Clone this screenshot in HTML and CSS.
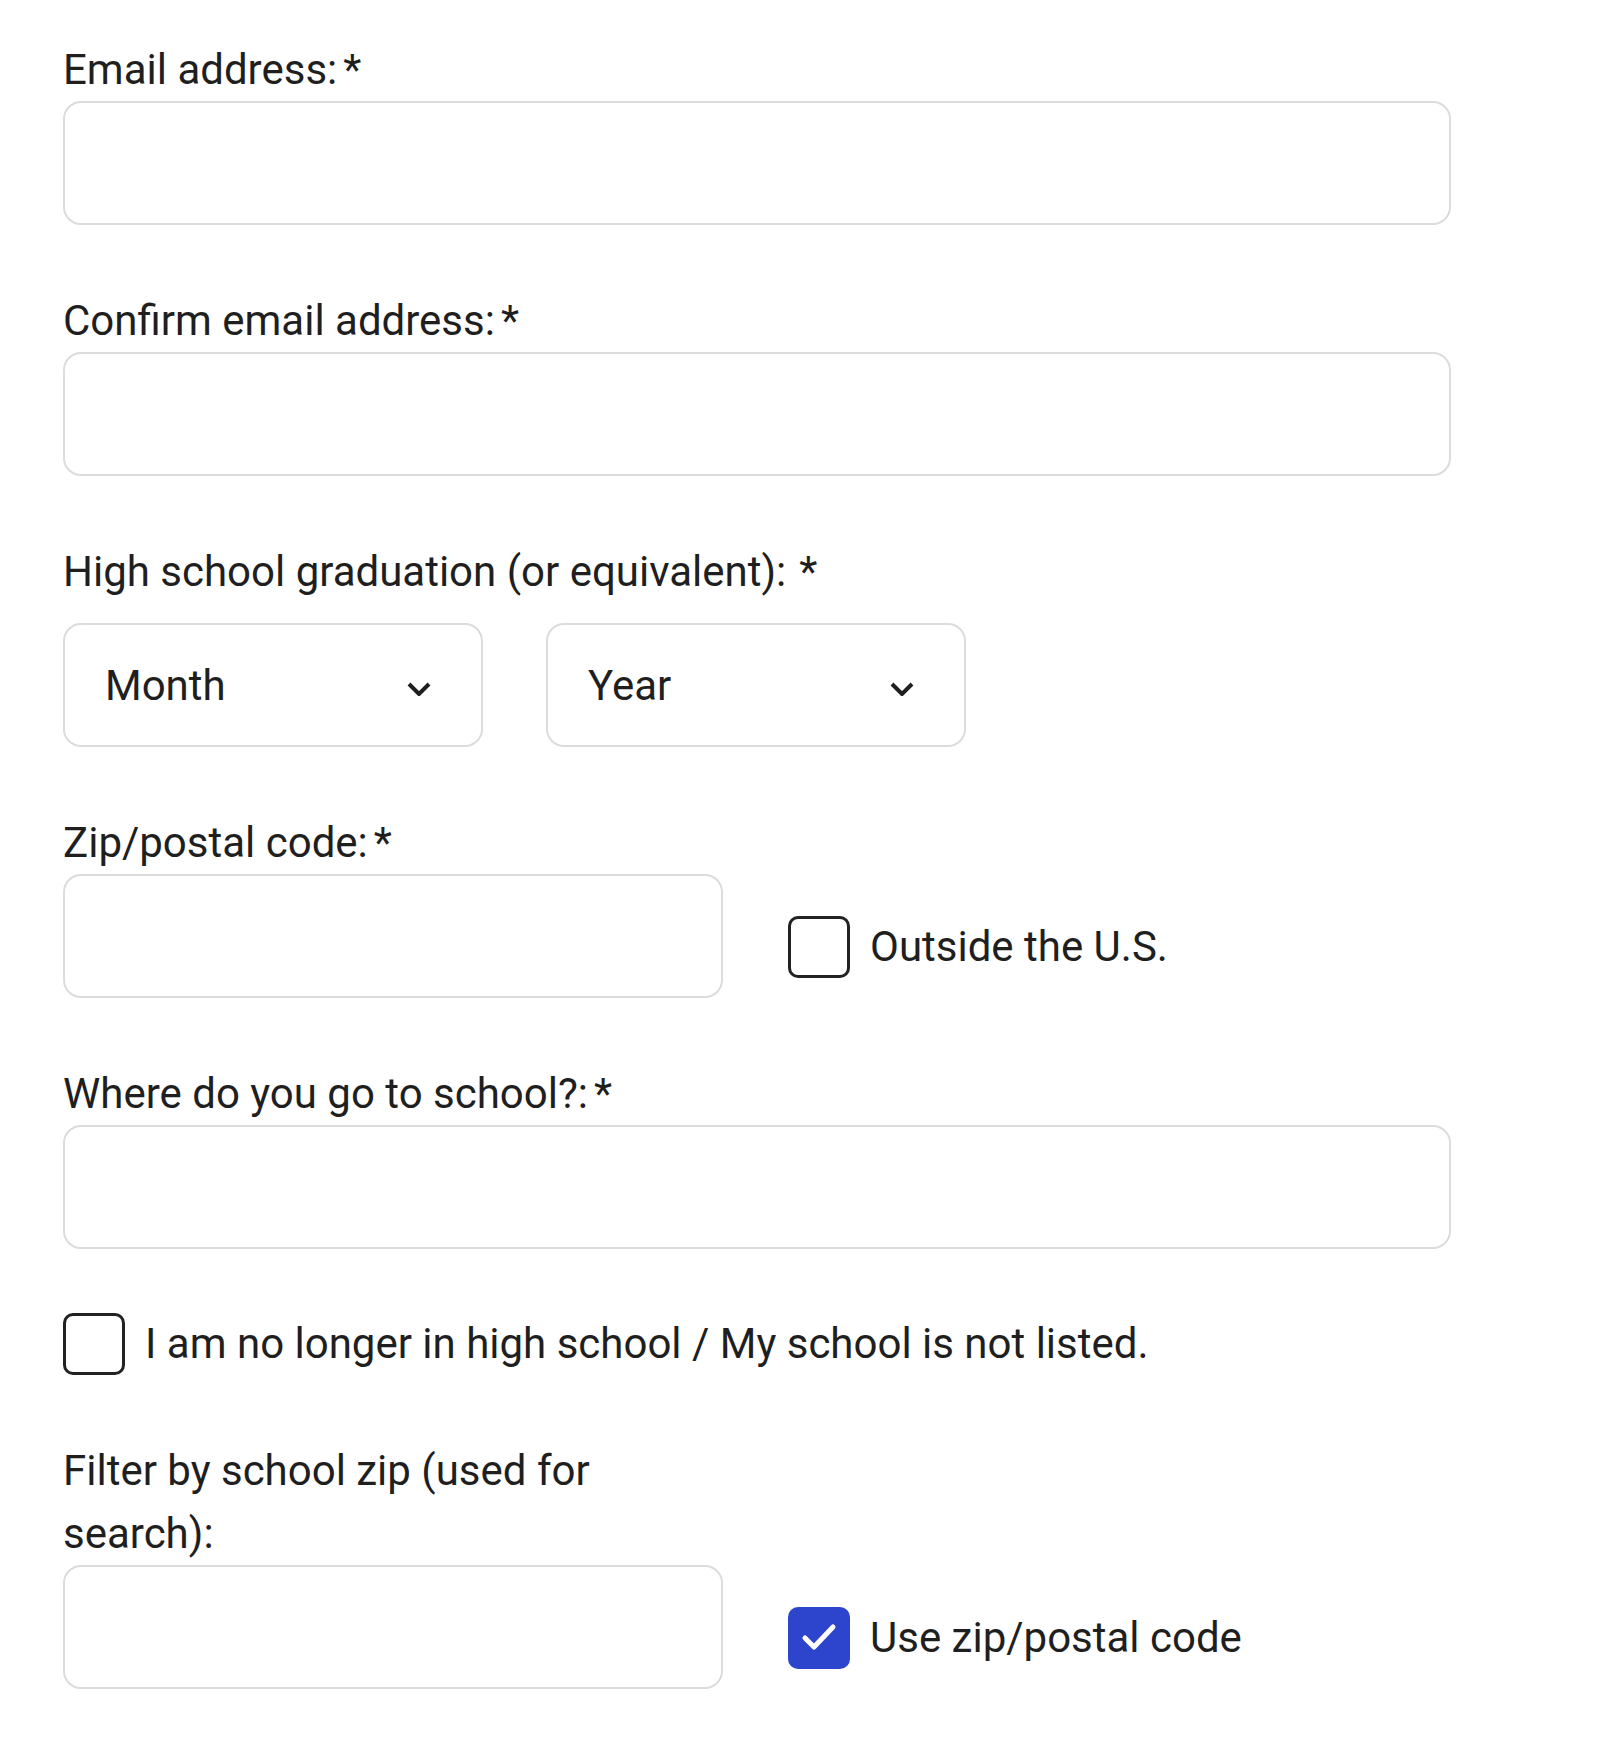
FILE: index.html
```html
<!DOCTYPE html>
<html lang="en">
<head>
    <meta charset="UTF-8">
    <meta name="viewport" content="width=device-width, initial-scale=1.0">
    <title>Student Information</title>
    <link rel="stylesheet" href="styles.css">
</head>
<body>
    <form class="signup">
        <div class="field">
            <label class="field-label" for="email">Email address:<span class="req">*</span></label>
            <input class="text-input" type="text" id="email">
        </div>

        <div class="field">
            <label class="field-label" for="email-confirm">Confirm email address:<span class="req">*</span></label>
            <input class="text-input" type="text" id="email-confirm">
        </div>

        <div class="field">
            <label class="field-label spaced">High school graduation (or equivalent):<span class="req wide">*</span></label>
            <div class="date-row">
                <div class="select">
                    <span>Month</span>
                    <svg class="chevron" viewBox="0 0 24 14" width="24" height="14"><path d="M2 2l10 10L22 2" fill="none" stroke="#1f1f1f" stroke-width="4"/></svg>
                </div>
                <div class="select">
                    <span>Year</span>
                    <svg class="chevron" viewBox="0 0 24 14" width="24" height="14"><path d="M2 2l10 10L22 2" fill="none" stroke="#1f1f1f" stroke-width="4"/></svg>
                </div>
            </div>
        </div>

        <div class="field">
            <label class="field-label" for="zip">Zip/postal code:<span class="req">*</span></label>
            <div class="split-row">
                <input class="text-input" type="text" id="zip">
                <label class="check">
                    <span class="box"></span>
                    Outside the U.S.
                </label>
            </div>
        </div>

        <div class="field">
            <label class="field-label" for="school">Where do you go to school?:<span class="req">*</span></label>
            <input class="text-input" type="text" id="school">
        </div>

        <div class="field">
            <label class="check">
                <span class="box"></span>
                I am no longer in high school / My school is not listed.
            </label>
        </div>

        <div class="field">
            <div class="split-row labels">
                <label class="field-label" for="school-zip">Filter by school zip (used for search):</label>
            </div>
            <div class="split-row">
                <input class="text-input" type="text" id="school-zip">
                <label class="check">
                    <span class="box checked">
                        <svg viewBox="0 0 62 62" width="62" height="62"><path d="M17 31l9 9 19-20" fill="none" stroke="#fff" stroke-width="5" stroke-linecap="round" stroke-linejoin="round"/></svg>
                    </span>
                    Use zip/postal code
                </label>
            </div>
        </div>
    </form>
</body>
</html>
```

FILE: styles.css
```css
body {
    margin: 0;
    background: #fff;
    color: #1f1f1f;
    font-family: Roboto, 'Noto Sans', sans-serif;
    font-size: 42px;
}
.signup {
    width: 1388px;
    padding: 38px 0 0 63px;
}
.field {
    margin-bottom: 64px;
}
.field-label {
    display: block;
    line-height: 63px;
}
.field-label.spaced {
    margin-bottom: 20px;
}
.req {
    margin-left: 6px;
}
.req.wide {
    margin-left: 13px;
}
.text-input {
    display: block;
    box-sizing: border-box;
    width: 100%;
    height: 124px;
    border: 2px solid #dcdcdc;
    border-radius: 18px;
    background: #fff;
    font: inherit;
    padding: 0 40px;
    outline: none;
}
.date-row {
    display: flex;
    gap: 63px;
}
.select {
    box-sizing: border-box;
    width: 420px;
    height: 124px;
    border: 2px solid #dcdcdc;
    border-radius: 18px;
    display: flex;
    align-items: center;
    justify-content: space-between;
    padding: 0 50px 0 40px;
}
.chevron {
    margin-top: 8px;
}
.split-row {
    display: grid;
    grid-template-columns: 660px 1fr;
    gap: 65px;
}
.check {
    display: flex;
    align-items: center;
    gap: 20px;
    line-height: 62px;
}
.split-row .check {
    align-self: center;
    margin-top: 22px;
}
.box {
    box-sizing: border-box;
    width: 62px;
    height: 62px;
    flex: none;
    border: 3px solid #222;
    border-radius: 10px;
}
.box.checked {
    border: none;
    background: #2d45cc;
}
.box svg {
    display: block;
}
```
